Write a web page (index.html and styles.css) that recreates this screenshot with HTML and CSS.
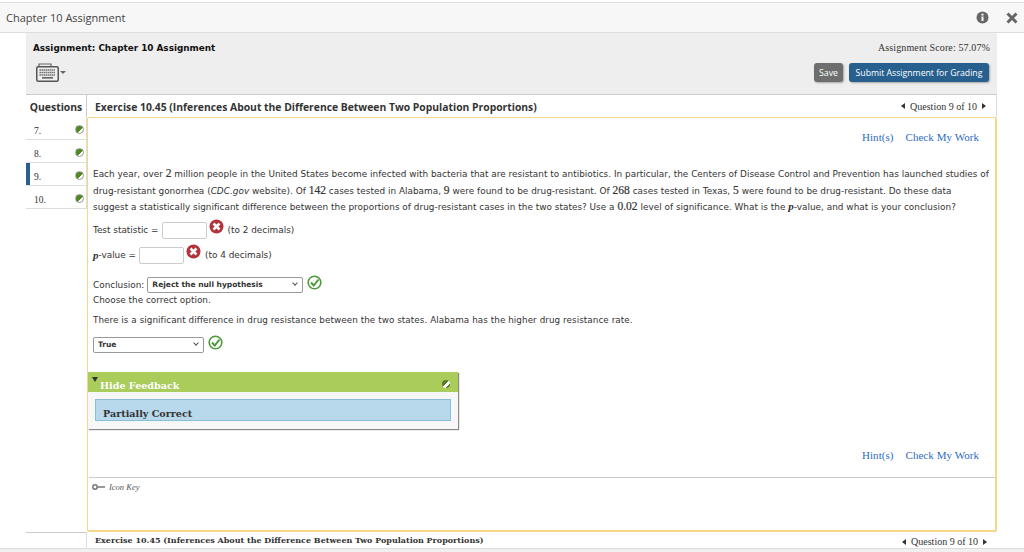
FILE: index.html
```html
<!DOCTYPE html>
<html lang="en">
<head>
<meta charset="utf-8">
<title>Chapter 10 Assignment</title>
<link rel="stylesheet" href="styles.css">
</head>
<body>
<header class="titlebar">
  <span class="title">Chapter 10 Assignment</span>
  <div class="title-icons">
    <svg class="ic-info" width="13" height="13" viewBox="0 0 13 13"><circle cx="6.5" cy="6.5" r="6" fill="#666"/><rect x="5.5" y="5.5" width="2" height="4.5" fill="#fff"/><rect x="5.5" y="2.7" width="2" height="1.8" fill="#fff"/></svg>
    <svg class="ic-close" width="12" height="12" viewBox="0 0 12 12"><path d="M1.5 1.5L10.5 10.5M10.5 1.5L1.5 10.5" stroke="#666" stroke-width="3"/></svg>
  </div>
</header>
<main class="app">
  <section class="head">
    <div class="head-top">
      <strong class="assign">Assignment: Chapter 10 Assignment</strong>
      <span class="score">Assignment Score: 57.07%</span>
    </div>
    <div class="head-bottom">
      <div class="kbd">
        <svg width="23" height="19" viewBox="0 0 23 19"><path d="M3 3V1H15V3" fill="none" stroke="#666" stroke-width="1.2"/><rect x="0.75" y="3.75" width="21.5" height="14.5" rx="1.5" fill="#eee" stroke="#555" stroke-width="1.5"/><path d="M3.5 7h16M3.5 9.5h16M3.5 12h16" stroke="#666" stroke-width="1.7" stroke-dasharray="1.4 .6"/><path d="M6 14.8h11" stroke="#666" stroke-width="1.7"/></svg>
        <span class="caret"></span>
      </div>
      <div class="actions">
        <button class="btn btn-save">Save</button>
        <button class="btn btn-submit">Submit Assignment for Grading</button>
      </div>
    </div>
  </section>
  <section class="tabs">
    <div class="tab-q">Questions</div>
    <div class="tab-ex">
      <strong>Exercise 10.45 (Inferences About the Difference Between Two Population Proportions)</strong>
      <span class="qnav"><i class="tri-l"></i>Question 9 of 10<i class="tri-r"></i></span>
    </div>
  </section>
  <section class="body">
    <nav class="side">
      <div class="q"><span>7.</span><i class="dot"></i></div>
      <div class="q"><span>8.</span><i class="dot"></i></div>
      <div class="q cur"><span>9.</span><i class="dot"></i></div>
      <div class="q"><span>10.</span><i class="dot"></i></div>
    </nav>
    <article class="panel">
      <div class="links"><a>Hint(s)</a><a>Check My Work</a></div>
      <p class="para">Each year, over <b class="m">2</b> million people in the United States become infected with bacteria that are resistant to antibiotics. In particular, the Centers of Disease Control and Prevention has launched studies of<br>drug-resistant gonorrhea (<em>CDC.gov</em> website). Of <b class="m">142</b> cases tested in Alabama, <b class="m">9</b> were found to be drug-resistant. Of <b class="m">268</b> cases tested in Texas, <b class="m">5</b> were found to be drug-resistant. Do these data<br>suggest a statistically significant difference between the proportions of drug-resistant cases in the two states? Use a <b class="m">0.02</b> level of significance. What is the <i class="mi">p</i>-value, and what is your conclusion?</p>
      <div class="row r1">Test statistic =<span class="inp"></span>
        <svg class="mark" width="15" height="15" viewBox="0 0 15 15"><circle cx="7.5" cy="7.5" r="7" fill="#b5323a"/><path d="M4.5 4.5L10.5 10.5M10.5 4.5L4.5 10.5" stroke="#fff" stroke-width="2.6"/></svg>
        <span class="note">(to 2 decimals)</span></div>
      <div class="row r2"><i class="mi">p</i>-value =<span class="inp"></span>
        <svg class="mark" width="15" height="15" viewBox="0 0 15 15"><circle cx="7.5" cy="7.5" r="7" fill="#b5323a"/><path d="M4.5 4.5L10.5 10.5M10.5 4.5L4.5 10.5" stroke="#fff" stroke-width="2.6"/></svg>
        <span class="note">(to 4 decimals)</span></div>
      <div class="row r3">Conclusion:<span class="sel sel-wide">Reject the null hypothesis<i class="chev"></i></span>
        <svg class="mark ok" width="15" height="15" viewBox="0 0 15 15"><circle cx="7.5" cy="7.5" r="6.3" fill="#fff" stroke="#4d9a3a" stroke-width="1.6"/><path d="M4 7.5L6.8 10.5L11.5 4.5" fill="none" stroke="#4d9a3a" stroke-width="2"/></svg></div>
      <p class="line choose">Choose the correct option.</p>
      <p class="line there">There is a significant difference in drug resistance between the two states. Alabama has the higher drug resistance rate.</p>
      <div class="row r4"><span class="sel sel-true">True<i class="chev"></i></span>
        <svg class="mark ok" width="15" height="15" viewBox="0 0 15 15"><circle cx="7.5" cy="7.5" r="6.3" fill="#fff" stroke="#4d9a3a" stroke-width="1.6"/><path d="M4 7.5L6.8 10.5L11.5 4.5" fill="none" stroke="#4d9a3a" stroke-width="2"/></svg></div>
      <div class="fb">
        <div class="fb-head"><i class="tri-d"></i><span>Hide Feedback</span><i class="dot dot-fb"></i></div>
        <div class="fb-body"><div class="fb-box">Partially Correct</div></div>
      </div>
      <div class="links links2"><a>Hint(s)</a><a>Check My Work</a></div>
      <div class="key">
        <svg width="14" height="8" viewBox="0 0 14 8"><circle cx="3" cy="4" r="2.2" fill="none" stroke="#777" stroke-width="1.5"/><path d="M5 4H13" stroke="#777" stroke-width="1.5"/></svg>
        <em>Icon Key</em>
      </div>
    </article>
  </section>
  <section class="foot">
    <div class="foot-l"></div>
    <div class="foot-r">
      <strong>Exercise 10.45 (Inferences About the Difference Between Two Population Proportions)</strong>
      <span class="qnav qnav-foot"><i class="tri-l"></i>Question 9 of 10<i class="tri-r"></i></span>
    </div>
  </section>
</main>
<div class="endbar"></div>
</body>
</html>
```
FILE: styles.css
```css
* { box-sizing: border-box; }
html, body { margin: 0; padding: 0; height: 552px; overflow: hidden; background: #fff; }
body { font-family: "DejaVu Sans", sans-serif; font-size: 8.9px; color: #333; padding-top: 2px; }
.titlebar { height: 31px; background: #f7f7f7; border-top: 1px solid #ddd; border-bottom: 1px solid #ddd; display: flex; align-items: center; justify-content: space-between; padding: 0 6px; }
.title { font-family: "Open Sans", sans-serif; font-size: 11px; color: #444; }
.title-icons { display: flex; align-items: center; gap: 17px; }
.app { width: 971px; margin-left: 26px; }
.head { height: 62px; background: #eee; border-bottom: 1px solid #ccc; padding: 8px 7px 0; }
.head-top { display: flex; justify-content: space-between; align-items: center; height: 14px; }
.assign { font-family: "DejaVu Sans", sans-serif; font-size: 8.85px; color: #111; font-weight: 700; }
.score { font-family: "Liberation Serif", serif; font-size: 10px; color: #333; letter-spacing: .12px; margin: -2px 0 0 0; }
.head-bottom { display: flex; justify-content: space-between; align-items: flex-start; margin-top: 8px; }
.kbd { display: flex; align-items: center; gap: 1px; margin-left: 3px; }
.caret { width: 0; height: 0; border-left: 3px solid transparent; border-right: 3px solid transparent; border-top: 3px solid #666; }
.actions { display: flex; gap: 6px; margin-right: 1px; }
.btn { height: 19px; border: 0; border-radius: 3px; color: #fff; font-family: "Open Sans", sans-serif; font-size: 8.7px; padding: 0 3px; box-shadow: 1px 1px 2px rgba(0,0,0,.3); }
.btn-save { width: 29px; background: #6e6e6e; }
.btn-submit { width: 140px; background: #27608f; }
.tabs { display: flex; height: 22px; }
.tab-q { width: 61px; display: flex; align-items: center; justify-content: center; font-family: "Open Sans", sans-serif; font-size: 10.4px; font-weight: 700; color: #333; border-right: 1px solid #ccc; padding-top: 1px; }
.tab-ex { flex: 1; display: flex; align-items: center; justify-content: space-between; padding: 0 6px 0 8px; border-right: 1px solid #ddd; }
.tab-ex strong { font-family: "Open Sans", sans-serif; font-size: 10.35px; color: #333; padding-top: 1px; }
.qnav { font-family: "Liberation Serif", serif; font-size: 10px; color: #333; display: inline-flex; align-items: center; gap: 5px; margin-right: 4px; }
.qnav-foot { padding-top: 3px; }
.tri-l { border-top: 3px solid transparent; border-bottom: 3px solid transparent; border-right: 4px solid #333; }
.tri-r { border-top: 3px solid transparent; border-bottom: 3px solid transparent; border-left: 4px solid #333; }
.body { display: flex; height: 415px; }
.side { width: 61px; }
.q { height: 23px; display: flex; align-items: center; justify-content: space-between; padding: 4px 2px 0 8px; border-bottom: 1px solid #ddd; border-right: 1px solid #ddd; font-family: "Liberation Serif", serif; font-size: 9.5px; color: #333; }
.q span { padding-top: 2px; }
.cur { box-shadow: inset 4px 0 0 #27608f; }
.dot { width: 9px; height: 9px; border-radius: 50%; display: block; margin-top: -2px; border: 1px solid #999; background: linear-gradient(135deg, #4f8a1e 0 62%, #fff 62%); }
.panel { flex: 1; border: 2px solid #f6d68b; border-width: 1px 2px 2px 1px; border-radius: 2px; padding: 0 0 0 5px; }
.links { display: flex; justify-content: flex-end; gap: 12px; padding-right: 16px; margin-top: 12px; height: 14px; line-height: 14px; font-family: "Liberation Serif", serif; font-size: 11px; letter-spacing: .05px; }
.links a { color: #2d6cc0; }
.para { margin: 22px 0 0; line-height: 15.6px; font-size: 8.9px; letter-spacing: .02px; white-space: nowrap; color: #333; }
.m { font-family: "Liberation Serif", serif; font-size: 11.5px; font-weight: 400; -webkit-text-stroke: .2px #333; }
.mi { font-family: "Liberation Serif", serif; font-size: 11px; font-weight: 700; font-style: italic; }
.row { display: flex; align-items: center; white-space: nowrap; }
.r1 { margin-top: 6px; height: 17px; }
.r2 { margin-top: 8px; height: 17px; }
.r3 { margin-top: 13px; height: 16px; }
.r4 { margin-top: 11px; height: 16px; }
.inp { width: 45px; height: 17px; background: #fff; border: 1px solid #ccc; border-radius: 2px; margin-left: 3px; }
.mark { margin: -8px 0 0 2px; }
.ok { margin-left: 4px; margin-top: -5px; }
.note { margin-left: 4px; }
.sel { display: flex; align-items: center; justify-content: space-between; height: 16px; border: 1px solid #999; border-radius: 2px; background: #fff; font-size: 7.5px; font-weight: 700; padding: 0 4px; color: #333; }
.sel-wide { width: 156px; margin-left: 3px; }
.sel-true { width: 111px; }
.chev { width: 4px; height: 4px; border-right: 1px solid #555; border-bottom: 1px solid #555; transform: rotate(45deg); margin: -3px 1px 0 0; }
.line { margin: 0; white-space: nowrap; line-height: 12px; }
.choose { margin-top: 1px; }
.there { margin-top: 8px; font-size: 8.77px; letter-spacing: .075px; }
.fb { width: 370px; margin: 19px 0 0 -5px; box-shadow: 1px 1px 1px #888; }
.fb-head { height: 20px; background: #a9cc5b; display: flex; align-items: center; position: relative; font-family: "DejaVu Serif", serif; font-weight: 700; font-size: 9.6px; color: #fff; padding: 7px 8px 0 12px; }
.fb-head span { flex: 1; }
.tri-d { position: absolute; left: 4px; top: 5px; border-left: 3px solid transparent; border-right: 3px solid transparent; border-top: 5px solid #333; }
.dot-fb { width: 8px; height: 8px; border: 0; background: linear-gradient(135deg, #5a7a2a 0 50%, #fff 50% 72%, #5a7a2a 72%); margin-top: -3px; }
.fb-body { background: #f7f7f7; padding: 7px; height: 37px; }
.fb-box { height: 22px; background: #b8d8eb; border: 1px solid #8abfdc; font-family: "DejaVu Serif", serif; font-weight: 700; font-size: 9.6px; color: #333; padding: 8px 7px 0; line-height: 12px; }
.links2 { margin-top: 19px; }
.key { margin: 15px 0 0 -4px; height: 53px; border-top: 1px solid #ccc; display: flex; align-items: center; padding: 0 0 34px 3px; gap: 3px; font-family: "Liberation Serif", serif; font-size: 8.5px; color: #555; }
.foot { display: flex; height: 16px; }
.foot-l { width: 61px; border-right: 1px solid #ddd; border-top: 1px solid #ccc; }
.foot-r { flex: 1; display: flex; justify-content: space-between; align-items: center; padding: 0 6px 0 8px; }
.foot-r strong { font-family: "DejaVu Serif", serif; font-size: 8px; color: #333; }
.endbar { height: 4px; background: #f0f0f0; border-top: 1px solid #ddd; }
```
